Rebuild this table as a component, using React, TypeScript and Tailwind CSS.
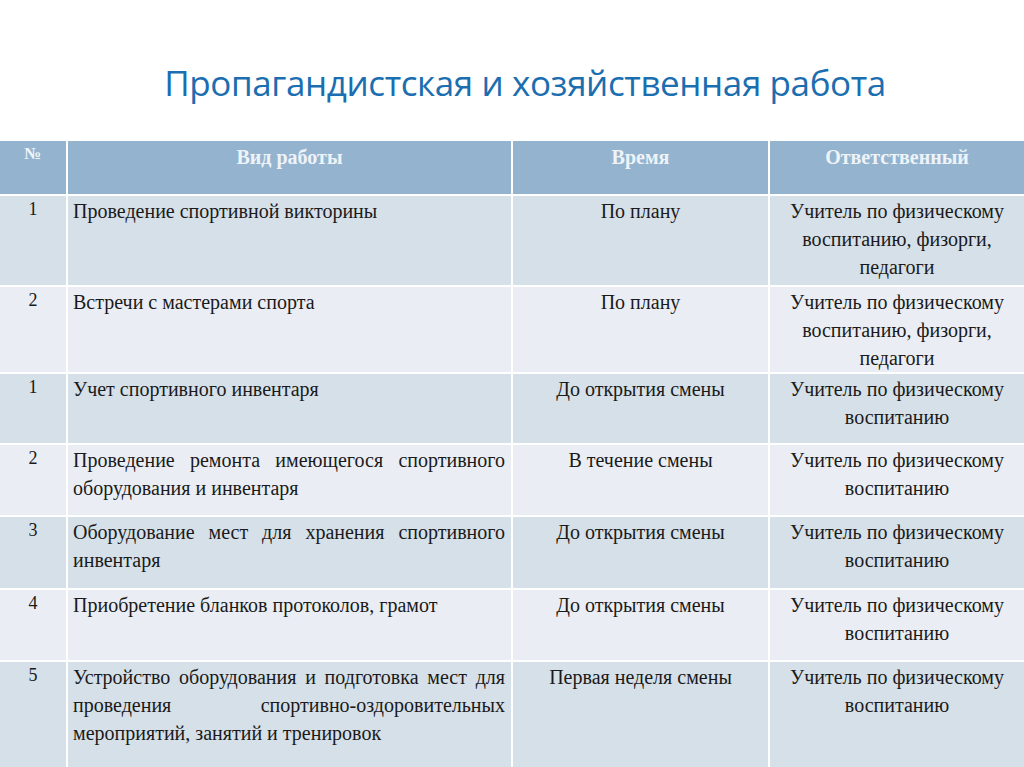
import React from "react";

const rows = [
  { n: "1", w: "Проведение спортивной викторины", t: "По плану", r: "Учитель по физическому воспитанию, физорги, педагоги", h: "h-[89px]", dark: true },
  { n: "2", w: "Встречи с мастерами спорта", t: "По плану", r: "Учитель по физическому воспитанию, физорги, педагоги", h: "h-[85px]", dark: false },
  { n: "1", w: "Учет спортивного инвентаря", t: "До открытия смены", r: "Учитель по физическому воспитанию", h: "h-[69px]", dark: true },
  { n: "2", w: "Проведение ремонта имеющегося спортивного оборудования и инвентаря", t: "В течение смены", r: "Учитель по физическому воспитанию", h: "h-[70px]", dark: false },
  { n: "3", w: "Оборудование мест для хранения спортивного инвентаря", t: "До открытия смены", r: "Учитель по физическому воспитанию", h: "h-[71px]", dark: true },
  { n: "4", w: "Приобретение бланков протоколов, грамот", t: "До открытия смены", r: "Учитель по физическому воспитанию", h: "h-[70px]", dark: false },
  { n: "5", w: "Устройство оборудования и подготовка мест для проведения спортивно-оздоровительных мероприятий, занятий и тренировок", t: "Первая неделя смены", r: "Учитель по физическому воспитанию", h: "h-[105px]", dark: true },
];

const serif = '"Liberation Serif", "Times New Roman", "DejaVu Serif", serif';

export default function App() {
  return (
    <div className="w-[1024px] h-[767px] overflow-hidden bg-white flex flex-col">
      <div className="h-[141px] flex items-start justify-center pt-[61px] pl-[26px]">
        <h1
          className="text-[35px] leading-[44px] text-[#1b6eb0] tracking-[-0.4px]"
          style={{ fontFamily: '"Open Sans", "Noto Sans", sans-serif' }}
        >
          Пропагандистская и хозяйственная работа
        </h1>
      </div>
      <div
        className="grid grid-cols-[66px_443px_255px_1fr] gap-[2px] bg-white text-[#1a1a1a]"
        style={{ fontFamily: serif }}
      >
        <div className="h-[53px] bg-[#94b3cf] text-[#eef3f8] font-bold text-[17px] leading-[20px] text-center pt-[3px] pr-[1px]">№</div>
        <div className="h-[53px] bg-[#94b3cf] text-[#eef3f8] font-bold text-[20px] text-center pt-[1px]">Вид работы</div>
        <div className="h-[53px] bg-[#94b3cf] text-[#eef3f8] font-bold text-[20px] text-center pt-[1px]">Время</div>
        <div className="h-[53px] bg-[#94b3cf] text-[#eef3f8] font-bold text-[20px] text-center pt-[1px]">Ответственный</div>
        {rows.map((row, i) => {
          const bg = row.dark ? "bg-[#d6e0e9]" : "bg-[#eaeef4]";
          return (
            <React.Fragment key={i}>
              <div className={`${row.h} ${bg} text-[18px] leading-[24px] text-center pt-[1px]`}>{row.n}</div>
              <div className={`${row.h} ${bg} text-[20px] leading-[28px] text-justify pl-[5px] pr-[6px] pt-[1px]`}>{row.w}</div>
              <div className={`${row.h} ${bg} text-[20px] leading-[28px] text-center pt-[1px] px-[4px]`}>{row.t}</div>
              <div className={`${row.h} ${bg} text-[20px] leading-[28px] text-center pt-[1px] px-[14px]`}>{row.r}</div>
            </React.Fragment>
          );
        })}
      </div>
    </div>
  );
}
